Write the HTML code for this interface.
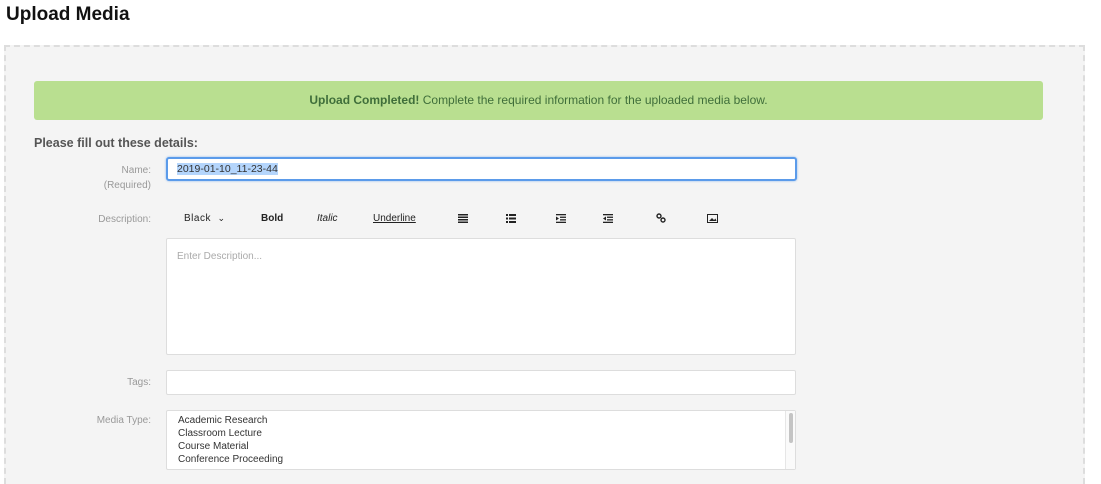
<!DOCTYPE html>
<html><head><meta charset="utf-8"><style>
*{box-sizing:border-box;margin:0;padding:0}
html{height:484px;overflow:hidden}
body{width:1101px;height:484px;background:#fff;font-family:"Liberation Sans",sans-serif;position:relative;overflow:hidden}
.a{position:absolute}
h1{position:absolute;left:6px;top:4px;font-size:19px;font-weight:bold;color:#111}
.panel{left:4px;top:45px;width:1081px;height:439px;border:2px dashed #ddd;border-bottom:0;background:#f4f4f4}
.banner{left:34px;top:81px;width:1009px;height:39px;background:#b9df90;border-radius:3px;color:#3f6e3a;font-size:12px;text-align:center;line-height:39px}
.lbl{font-size:10px;color:#999;text-align:right;width:80px;left:71px}
.box{background:#fff;border:1px solid #ddd;border-radius:2px}
.tb{font-size:10px;color:#222;top:213px}
</style></head><body>
<h1>Upload Media</h1>
<div class="a panel"></div>
<div class="a banner"><b>Upload Completed!</b> Complete the required information for the uploaded media below.</div>
<div class="a" style="left:34px;top:136px;font-size:12.5px;font-weight:bold;color:#555">Please fill out these details:</div>
<div class="a lbl" style="top:163px;line-height:15px">Name:<br>(Required)</div>
<div class="a" style="left:166px;top:157px;width:631px;height:24px;background:#fff;border:2px solid #5b9bea;border-radius:3px;box-shadow:0 0 2px #8ab9f0"></div>
<div class="a" style="left:177px;top:163px;font-size:10.5px;color:#333;background:#b4d5fc;line-height:12px">2019-01-10_11-23-44</div>
<div class="a lbl" style="top:214px">Description:</div>
<div class="a tb" style="left:184px;letter-spacing:.5px">Black &nbsp;<span style="font-size:9px">&#8964;</span></div>
<div class="a tb" style="left:261px;font-weight:bold">Bold</div>
<div class="a tb" style="left:317px;font-style:italic">Italic</div>
<div class="a tb" style="left:373px;text-decoration:underline">Underline</div>
<svg class="a" style="left:458px;top:214px" width="10" height="9"><rect x="0" y="0" width="10" height="1.5" fill="#222"/><rect x="0" y="2.5" width="10" height="1.5" fill="#222"/><rect x="0" y="5" width="10" height="1.5" fill="#222"/><rect x="0" y="7.5" width="10" height="1.5" fill="#222"/></svg>
<svg class="a" style="left:506px;top:214px" width="10" height="9"><rect x="0" y="0" width="2" height="2" fill="#222"/><rect x="3" y="0" width="7" height="2" fill="#222"/><rect x="0" y="3.5" width="2" height="2" fill="#222"/><rect x="3" y="3.5" width="7" height="2" fill="#222"/><rect x="0" y="7" width="2" height="2" fill="#222"/><rect x="3" y="7" width="7" height="2" fill="#222"/></svg>
<svg class="a" style="left:556px;top:214px" width="10" height="9"><rect x="0" y="0" width="10" height="1.3" fill="#222"/><rect x="4" y="2.6" width="6" height="1.3" fill="#222"/><rect x="4" y="5.2" width="6" height="1.3" fill="#222"/><rect x="0" y="7.7" width="10" height="1.3" fill="#222"/><path d="M0 2.5L3 4.5L0 6.5Z" fill="#222"/></svg>
<svg class="a" style="left:603px;top:214px" width="10" height="9"><rect x="0" y="0" width="10" height="1.3" fill="#222"/><rect x="4" y="2.6" width="6" height="1.3" fill="#222"/><rect x="4" y="5.2" width="6" height="1.3" fill="#222"/><rect x="0" y="7.7" width="10" height="1.3" fill="#222"/><path d="M3 2.5L0 4.5L3 6.5Z" fill="#222"/></svg>
<svg class="a" style="left:656px;top:213px" width="10" height="10"><circle cx="3" cy="3" r="2" fill="none" stroke="#222" stroke-width="1.4"/><circle cx="7" cy="7" r="2" fill="none" stroke="#222" stroke-width="1.4"/></svg>
<svg class="a" style="left:707px;top:214px" width="11" height="9"><rect x=".5" y=".5" width="10" height="8" fill="none" stroke="#222"/><path d="M2 7L5 4L7 6L8.5 4.5L9.5 7Z" fill="#222"/></svg>
<div class="a box" style="left:166px;top:238px;width:630px;height:117px"></div>
<div class="a" style="left:177px;top:251px;font-size:10px;color:#aaa">Enter Description...</div>
<div class="a lbl" style="top:377px">Tags:</div>
<div class="a box" style="left:166px;top:370px;width:630px;height:25px"></div>
<div class="a lbl" style="top:415px">Media Type:</div>
<div class="a box" style="left:166px;top:410px;width:630px;height:60px"></div>
<div class="a" style="left:178px;top:414px;font-size:10px;color:#333;line-height:13px">Academic Research<br>Classroom Lecture<br>Course Material<br>Conference Proceeding</div>
<div class="a" style="left:785px;top:411px;width:10px;height:58px;border-left:1px solid #e6e6e6;background:#fafafa"></div>
<div class="a" style="left:789px;top:413px;width:4px;height:30px;background:#c4c4c4;border-radius:2px"></div>
</body></html>
